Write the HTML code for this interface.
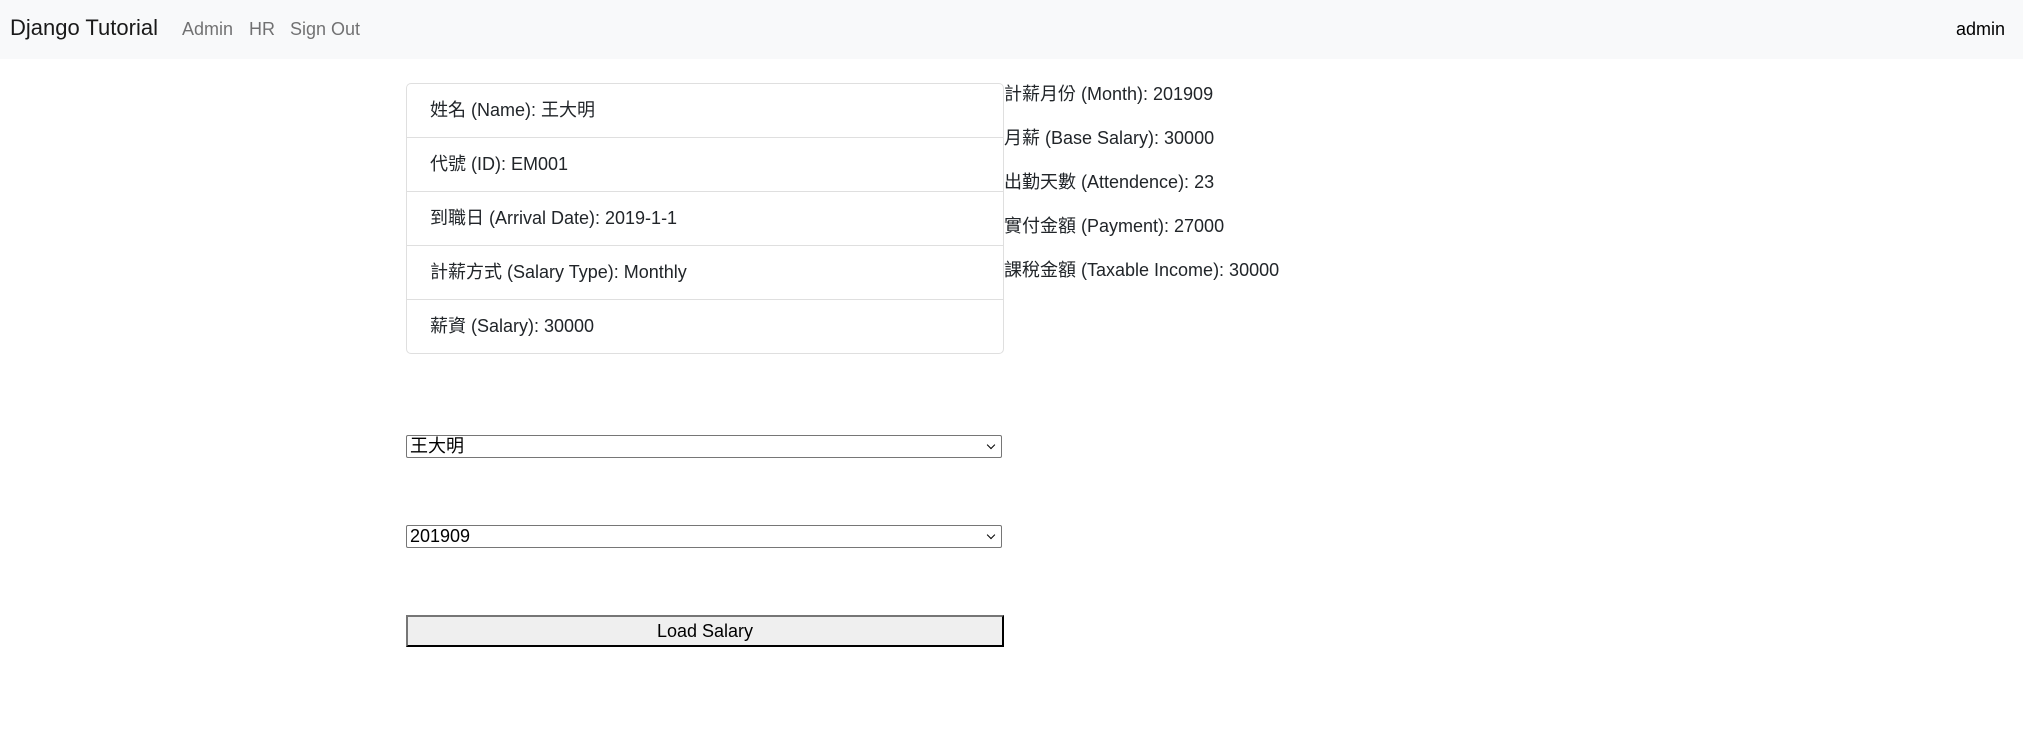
<!DOCTYPE html>
<html><head><meta charset="utf-8"><style>
body{margin:0;width:2023px;height:751px;background:#fff;font-family:"Liberation Sans","Noto Sans CJK TC",sans-serif;font-size:18px;color:#212529;position:relative;overflow:hidden}
.nav{position:absolute;left:0;top:0;width:2023px;height:59px;background:#f8f9fa}
.nav span{position:absolute;top:16px;line-height:27px}
.brand{left:10px;font-size:22px;color:rgba(0,0,0,.9);top:14px!important}
.link{color:rgba(0,0,0,.55)}
.card{position:absolute;left:406px;top:83px;width:596px;border:1px solid #dfdfdf;border-radius:5px}
.item{height:53px;line-height:53px;padding-left:23px;border-top:1px solid #dfdfdf}
.item:first-child{border-top:none}
.r{position:absolute;left:1004px;line-height:27px}
.sel{position:absolute;left:406px;width:596px;height:23px;border:1px solid #767676;border-radius:2px;box-sizing:border-box;line-height:21px;padding-left:3px;font-size:18px;color:#000}
.sel:after{content:"";position:absolute;right:7px;top:6px;width:5px;height:5px;border-right:1.5px solid #000;border-bottom:1.5px solid #000;transform:rotate(45deg)}
.btn{position:absolute;left:406px;top:615px;width:598px;height:32px;box-sizing:border-box;border:2px solid #000;border-top-color:#767676;border-left-color:#767676;background:#efefef;text-align:center;line-height:28px;color:#000}
</style></head><body>
<div class="nav">
<span class="brand">Django Tutorial</span>
<span class="link" style="left:182px">Admin</span>
<span class="link" style="left:249px">HR</span>
<span class="link" style="left:290px">Sign Out</span>
<span style="right:18px;color:#000">admin</span>
</div>
<div class="card">
<div class="item">姓名 (Name): 王大明</div>
<div class="item">代號 (ID): EM001</div>
<div class="item">到職日 (Arrival Date): 2019-1-1</div>
<div class="item">計薪方式 (Salary Type): Monthly</div>
<div class="item">薪資 (Salary): 30000</div>
</div>
<div class="r" style="top:81px">計薪月份 (Month): 201909</div>
<div class="r" style="top:125px">月薪 (Base Salary): 30000</div>
<div class="r" style="top:169px">出勤天數 (Attendence): 23</div>
<div class="r" style="top:213px">實付金額 (Payment): 27000</div>
<div class="r" style="top:257px">課稅金額 (Taxable Income): 30000</div>
<div class="sel" style="top:435px">王大明</div>
<div class="sel" style="top:525px">201909</div>
<div class="btn">Load Salary</div>
</body></html>
